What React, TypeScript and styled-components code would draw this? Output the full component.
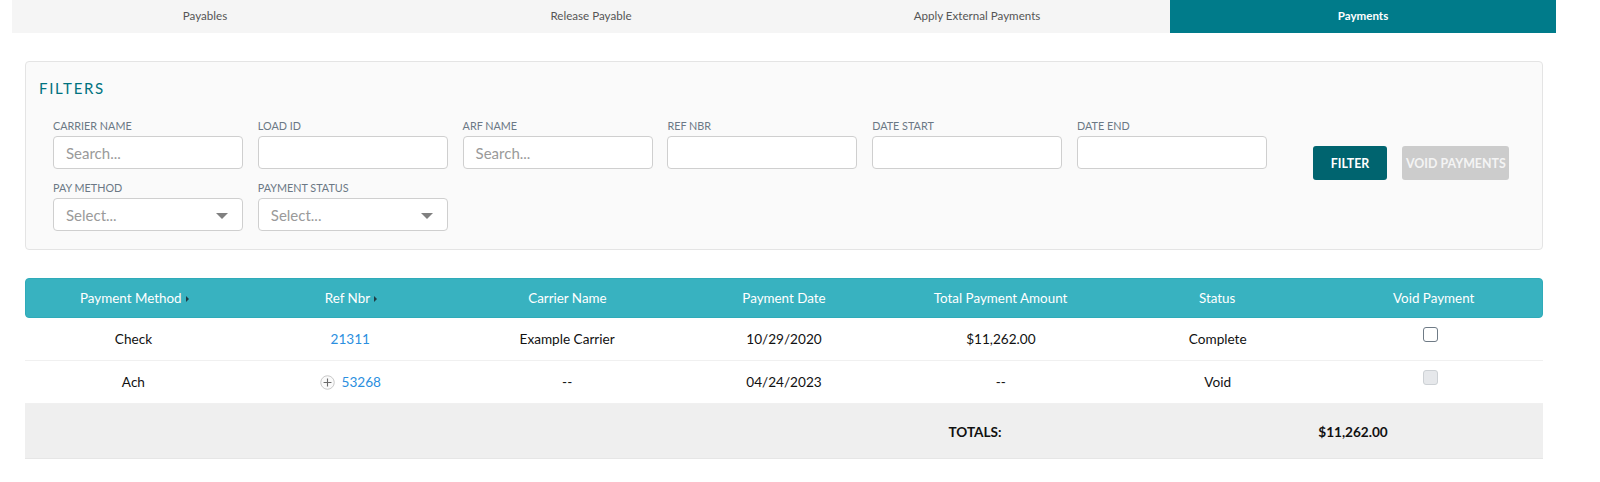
import { createGlobalStyle, styled } from "styled-components";

// Types
type Payment = {
  method: string;
  ref: string;
  expandable?: boolean;
  carrier: string;
  date: string;
  amount: string;
  status: string;
  voidable: boolean;
};

const payments: Payment[] = [
  {
    method: "Check",
    ref: "21311",
    carrier: "Example Carrier",
    date: "10/29/2020",
    amount: "$11,262.00",
    status: "Complete",
    voidable: true,
  },
  {
    method: "Ach",
    ref: "53268",
    expandable: true,
    carrier: "--",
    date: "04/24/2023",
    amount: "--",
    status: "Void",
    voidable: false,
  },
];

const tabs = ["Payables", "Release Payable", "Apply External Payments", "Payments"];

// Styled Components
const GlobalStyle = createGlobalStyle`
  body {
    margin: 0;
    background: #fff;
    font-family: Lato, "Open Sans", sans-serif;
    color: #222;
  }
  * { box-sizing: border-box; }
`;

const Page = styled.div`
  width: 1556px;
  padding-left: 12px;
`;

const TabBar = styled.div`
  display: grid;
  grid-template-columns: repeat(4, 1fr);
  height: 33px;
  background: #f5f5f5;
`;

const Tab = styled.div<{ $active?: boolean }>`
  display: flex;
  align-items: center;
  justify-content: center;
  font-size: 11.6px;
  font-weight: ${(p) => (p.$active ? 700 : 400)};
  color: ${(p) => (p.$active ? "#fff" : "#555")};
  background: ${(p) => (p.$active ? "#007b8a" : "transparent")};
  padding-bottom: 2px;
`;

const Content = styled.div`
  padding: 28px 13px 0 13px;
`;

const FilterPanel = styled.div`
  background: #fafafa;
  border: 1px solid #e4e4e4;
  border-radius: 4px;
  height: 189px;
  padding: 17px 13px 0 13px;
`;

const FilterTitle = styled.h3`
  margin: 0 0 22px 0;
  font-size: 15px;
  font-weight: 400;
  letter-spacing: 1.7px;
  color: #00727f;
`;

const FilterBody = styled.div`
  display: flex;
  padding-left: 14px;
`;

const FieldGrid = styled.div`
  display: grid;
  grid-template-columns: repeat(6, 190px);
  column-gap: 14.8px;
  row-gap: 12px;
`;

const Field = styled.div`
  display: flex;
  flex-direction: column;
  gap: 4px;
`;

const Label = styled.label`
  font-size: 10.8px;
  color: #6b7885;
  text-transform: uppercase;
  height: 13px;
`;

const Input = styled.div`
  position: relative;
  height: 33px;
  background: #fff;
  border: 1px solid #cfcfcf;
  border-radius: 4px;
  display: flex;
  align-items: center;
  padding: 0 12px;
  font-size: 15px;
  color: #9a9a9a;
`;

const Caret = styled.span`
  position: absolute;
  right: 14px;
  top: 14px;
  width: 0;
  height: 0;
  border-left: 6px solid transparent;
  border-right: 6px solid transparent;
  border-top: 6px solid #808080;
`;

const Actions = styled.div`
  display: flex;
  gap: 15px;
  margin-left: 46px;
  padding-top: 27px;
`;

const Button = styled.button<{ $disabled?: boolean }>`
  height: 34px;
  width: ${(p) => (p.$disabled ? "107px" : "74px")};
  padding: 0 ${(p) => (p.$disabled ? "4px" : "0")};
  border: none;
  border-radius: 3px;
  font-family: inherit;
  font-size: 12.4px;
  font-weight: 700;
  white-space: nowrap;
  overflow: hidden;
  text-align: ${(p) => (p.$disabled ? "left" : "center")};
  color: ${(p) => (p.$disabled ? "#f4f4f4" : "#fff")};
  background: ${(p) => (p.$disabled ? "#cccccc" : "#00646f")};
`;

const Table = styled.div`
  margin-top: 28px;
`;

const cols = "repeat(7, 1fr)";

const HeaderRow = styled.div`
  display: grid;
  grid-template-columns: ${cols};
  height: 40px;
  background: #38b2c0;
  border-radius: 4px;
  border: 1px solid #2fabb9;
`;

const HeaderCell = styled.div`
  display: flex;
  align-items: center;
  justify-content: center;
  color: #fff;
  font-size: 13.4px;
  gap: 4px;
`;

const SortArrow = styled.span`
  width: 0;
  height: 0;
  border-top: 3.5px solid transparent;
  border-bottom: 3.5px solid transparent;
  border-left: 3.5px solid #1f3c44;
  margin-top: 2px;
`;

const Row = styled.div`
  display: grid;
  grid-template-columns: ${cols};
  height: 43px;
  border-bottom: 1px solid #f0f0f0;
`;

const Cell = styled.div`
  display: flex;
  align-items: center;
  justify-content: center;
  font-size: 13.6px;
  color: #111;
  gap: 7px;
`;

const CheckCell = styled.div`
  display: flex;
  justify-content: center;
  padding-top: 9px;
  padding-right: 8px;
`;

const Link = styled.a`
  color: #2b8fe0;
  text-decoration: none;
`;

const Checkbox = styled.span<{ $disabled?: boolean }>`
  width: 15px;
  height: 15px;
  border-radius: 3px;
  border: 1.5px solid ${(p) => (p.$disabled ? "#cdd1d5" : "#6f7b86")};
  background: ${(p) => (p.$disabled ? "#e6e8eb" : "#fff")};
`;

const TotalsRow = styled.div`
  display: grid;
  grid-template-columns: 868px 164px 214px 164px 1fr;
  height: 55px;
  background: #efefef;
  border-bottom: 1px solid #e6e6e6;
  font-size: 13.6px;
  font-weight: 700;
  color: #111;
`;

const TotalCell = styled.div`
  display: flex;
  align-items: center;
  justify-content: center;
  padding-top: 2px;
`;

function PlusIcon() {
  return (
    <svg width="15" height="15" viewBox="0 0 16 16">
      <circle cx="8" cy="8" r="7.2" fill="#fafafa" stroke="#c4c4c4" strokeWidth="1" />
      <path d="M8 3.8v8.4M3.8 8h8.4" stroke="#6a6a6a" strokeWidth="1.2" />
    </svg>
  );
}

function App() {
  return (
    <Page>
      <GlobalStyle />
      <TabBar>
        {tabs.map((t) => (
          <Tab key={t} $active={t === "Payments"}>
            {t}
          </Tab>
        ))}
      </TabBar>
      <Content>
        <FilterPanel>
          <FilterTitle>FILTERS</FilterTitle>
          <FilterBody>
            <FieldGrid>
              <Field>
                <Label>Carrier Name</Label>
                <Input>Search...</Input>
              </Field>
              <Field>
                <Label>Load ID</Label>
                <Input />
              </Field>
              <Field>
                <Label>ARF Name</Label>
                <Input>Search...</Input>
              </Field>
              <Field>
                <Label>Ref Nbr</Label>
                <Input />
              </Field>
              <Field>
                <Label>Date Start</Label>
                <Input />
              </Field>
              <Field>
                <Label>Date End</Label>
                <Input />
              </Field>
              <Field>
                <Label>Pay Method</Label>
                <Input>
                  Select...
                  <Caret />
                </Input>
              </Field>
              <Field>
                <Label>Payment Status</Label>
                <Input>
                  Select...
                  <Caret />
                </Input>
              </Field>
            </FieldGrid>
            <Actions>
              <Button>FILTER</Button>
              <Button $disabled>VOID PAYMENTS</Button>
            </Actions>
          </FilterBody>
        </FilterPanel>

        <Table>
          <HeaderRow>
            <HeaderCell>
              Payment Method <SortArrow />
            </HeaderCell>
            <HeaderCell>
              Ref Nbr <SortArrow />
            </HeaderCell>
            <HeaderCell>Carrier Name</HeaderCell>
            <HeaderCell>Payment Date</HeaderCell>
            <HeaderCell>Total Payment Amount</HeaderCell>
            <HeaderCell>Status</HeaderCell>
            <HeaderCell>Void Payment</HeaderCell>
          </HeaderRow>
          {payments.map((p) => (
            <Row key={p.ref}>
              <Cell>{p.method}</Cell>
              <Cell>
                {p.expandable && <PlusIcon />}
                <Link href="#">{p.ref}</Link>
              </Cell>
              <Cell>{p.carrier}</Cell>
              <Cell>{p.date}</Cell>
              <Cell>{p.amount}</Cell>
              <Cell>{p.status}</Cell>
              <CheckCell>
                <Checkbox $disabled={!p.voidable} />
              </CheckCell>
            </Row>
          ))}
          <TotalsRow>
            <div />
            <TotalCell>TOTALS:</TotalCell>
            <div />
            <TotalCell>$11,262.00</TotalCell>
            <div />
          </TotalsRow>
        </Table>
      </Content>
    </Page>
  );
}

export default App;
